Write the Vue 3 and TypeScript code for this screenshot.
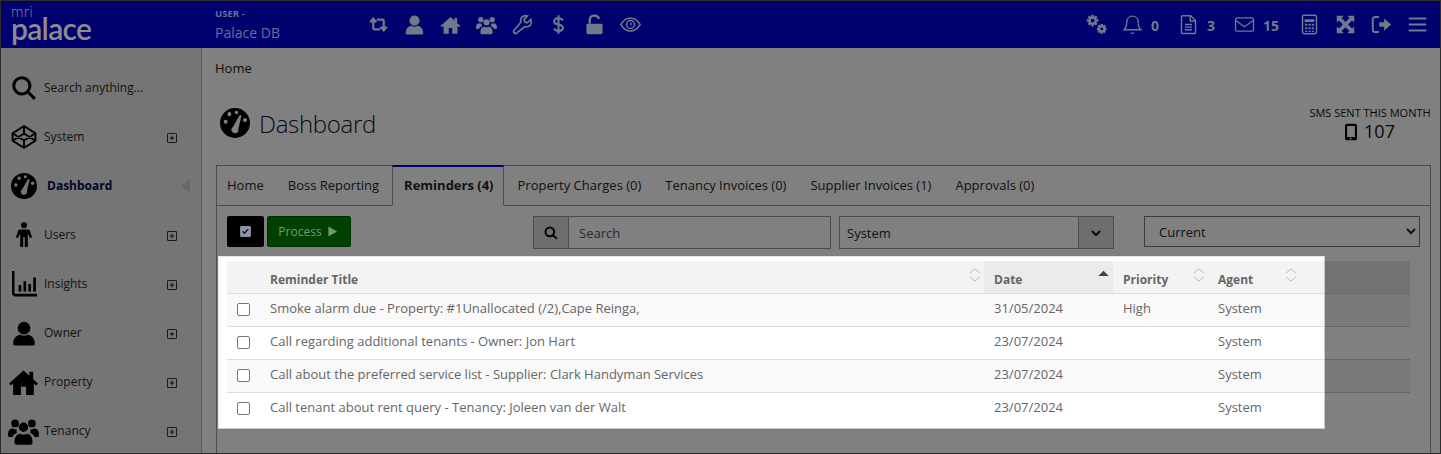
<script setup lang="ts">
const circ = (x: number, y: number, r: number) =>
  `M${x - r} ${y}a${r} ${r} 0 1 0 ${2 * r} 0a${r} ${r} 0 1 0 ${-2 * r} 0z`

const gear = (x: number, y: number, r: number) => {
  let d = circ(x, y, r)
  for (let i = 0; i < 8; i++) {
    const a = (i * Math.PI) / 4
    const p = (n: number) => `${(x + Math.cos(a) * n).toFixed(2)} ${(y + Math.sin(a) * n).toFixed(2)}`
    d += `M${p(r)}L${p(r * 1.85)}`
  }
  return d
}

interface Glyph { f?: string; s?: string; w?: number }

const I: Record<string, Glyph> = {
  retweet: { s: 'M6 6v10a1.5 1.5 0 0 0 1.5 1.5H14M2.5 9.5 6 5.5l3.5 4M10 6.5h6.5a1.5 1.5 0 0 1 1.5 1.5v10M14.5 14.5l3.5 4 3.5-4', w: 2.6 },
  user: { f: circ(12, 7.5, 5.8) + 'M2 22c0-5 2.8-8 6.5-8.5 2 1.3 5 1.3 7 0C19.2 14 22 17 22 22c0 1-.8 1.5-1.8 1.5H3.8C2.8 23.5 2 23 2 22z' },
  home: { f: 'M12 3.5.8 13.5 2.2 15 4 13.5V22.5h6V16h4v6.5h6V13.5L21.8 15l1.4-1.5L19.5 10.2V4.5h-3v3Z' },
  users: { f: circ(5.5, 6.5, 3) + circ(18.5, 6.5, 3) + circ(12, 9.5, 3.6) + 'M0 15c0-3 1.5-4.5 4-4.5 1 .7 2 .8 3 .5-.5 1-.6 2 0 3-1.6.5-3 1.5-3.5 3H1c-.6 0-1-.6-1-2zM24 15c0-3-1.5-4.5-4-4.5-1 .7-2 .8-3 .5.5 1 .6 2 0 3 1.6.5 3 1.5 3.5 3H23c.6 0 1-.6 1-2zM5 21c0-4 2-6.5 4.5-6.5 1.5 1 3.5 1 5 0C17 14.5 19 17 19 21c0 1.5-1 2-2 2H7c-1 0-2-.5-2-2z' },
  wrench: { s: 'M21.5 6 17.5 10l-3-.8-.8-3 4-4c-3-1-6.5.5-7.5 3.3-.4 1.2-.4 2.5 0 3.7L2.5 18.5a2.1 2.1 0 0 0 3 3l9.3-7.2c3.2 1 6.3-.6 7-3.5.3-1.7.2-3.3-.3-4.8z', w: 1.9 },
  dollar: { s: 'M17 7.5C16 5.5 14.2 4.8 12 4.8c-3 0-5 1.4-5 3.7s2 3 5 3.5 5 1.3 5 3.7-2 3.6-5 3.6c-2.2 0-4-.8-5-2.8M12 1.5v21', w: 2.4 },
  unlock: { f: 'M4.5 11h15c1 0 1.8.8 1.8 1.8v8.4c0 1-.8 1.8-1.8 1.8h-15c-1 0-1.8-.8-1.8-1.8v-8.4c0-1 .8-1.8 1.8-1.8z', s: 'M6.5 11V7a5.5 5.5 0 0 1 10.7-1.5', w: 2.6 },
  eye: { s: 'M1 12c3-5 7-7.5 11-7.5S20 7 23 12c-3 5-7 7.5-11 7.5S4 17 1 12z' + circ(12, 12, 4.5) + 'M12.5 10v3', w: 1.7 },
  cogs: { s: gear(7.5, 7.5, 3.6) + gear(18, 17, 3), w: 2.8 },
  bell: { s: 'M12 2.5c-4 0-6.5 3-6.5 6.5 0 5-1 7-3 9h19c-2-2-3-4-3-9 0-3.5-2.5-6.5-6.5-6.5zM10 21c.5 1.5 3.5 1.5 4 0', w: 1.5 },
  file: { s: 'M5 2h9.5L20 7.5V21a1.3 1.3 0 0 1-1.3 1.3H5.3A1.3 1.3 0 0 1 4 21V3.3A1.3 1.3 0 0 1 5.3 2zM14 2.2V8h6M8 12h8M8 15h8M8 18h8', w: 1.6 },
  mail: { s: 'M3.5 4.5h17A1.8 1.8 0 0 1 22.3 6.3v11.4a1.8 1.8 0 0 1-1.8 1.8h-17a1.8 1.8 0 0 1-1.8-1.8V6.3A1.8 1.8 0 0 1 3.5 4.5zM2 7.5l10 7 10-7', w: 1.5 },
  calc: { f: 'M6.5 6h11v3h-11zM7 11h2.5v2.5H7zM10.8 11h2.5v2.5h-2.5zM14.5 11H17v2.5h-2.5zM7 15h2.5v2.5H7zM10.8 15h2.5v2.5h-2.5zM14.5 15H17v2.5h-2.5zM7 19h2.5v1.5H7zM10.8 19h2.5v1.5h-2.5zM14.5 19H17v1.5h-2.5z', s: 'M6 1.5h12a2 2 0 0 1 2 2v17a2 2 0 0 1-2 2H6a2 2 0 0 1-2-2v-17a2 2 0 0 1 2-2z', w: 1.7 },
  arrows: { f: 'M2 2h8L7.5 4.5 12 9l4.5-4.5L14 2h8v8l-2.5-2.5L15 12l4.5 4.5L22 14v8h-8l2.5-2.5L12 15l-4.5 4.5L10 22H2v-8l2.5 2.5L9 12 4.5 7.5 2 10z' },
  signout: { f: 'M9.5 9.5H15V5l8 7-8 7v-4.5H9.5z', s: 'M9 3.5H4.5A2.5 2.5 0 0 0 2 6v12a2.5 2.5 0 0 0 2.5 2.5H9', w: 2.2 },
  bars: { f: 'M2 4h20v2.4H2zM2 10.8h20v2.4H2zM2 17.6h20V20H2z' },
  search: { s: circ(10, 10, 7.5) + 'M15.5 15.5l6.5 6.5', w: 2.8 },
  codepen: { s: 'M12 2 22.5 8.5v7L12 22 1.5 15.5v-7zM12 2v6.8M22.5 8.5 12 15.2 1.5 8.5M1.5 15.5 12 8.8l10.5 6.7M12 15.2V22', w: 1.8 },
  dashboard: { f: circ(12, 12, 12) + circ(4.5, 11, 1.6) + circ(7.5, 4.9, 1.6) + circ(13.2, 3.5, 1.4) + circ(20, 9.5, 1.6) + 'M15.8 5.5l1.4.5-2.5 10.7a2.8 2.8 0 1 1-4.4-1.6z' },
  male: { f: circ(12, 3, 2.8) + 'M8.5 7h7c1 0 1.7.6 2 1.5l2 5.5-2 .8-2-4.3V23h-2.8v-9h-1.4v9H8.5V10.5L6.5 14.8 4.5 14l2-5.5C6.8 7.6 7.5 7 8.5 7z' },
  chart: { f: 'M1 0h2.2v20c0 .6.4 1 1 1H24v2.5H4c-1.8 0-3-1.3-3-3zM7 13h2.5v6H7zM11.5 9.5H14V19h-2.5zM16 12h2.5v7H16zM20.5 6H23v13h-2.5z' },
  plus: { s: 'M2.8 1h18.4A1.8 1.8 0 0 1 23 2.8v18.4a1.8 1.8 0 0 1-1.8 1.8H2.8A1.8 1.8 0 0 1 1 21.2V2.8A1.8 1.8 0 0 1 2.8 1zM12 6.5v11M6.5 12h11', w: 2.4 },
  phone: { f: 'M6.5 1h11A2.5 2.5 0 0 1 20 3.5v17a2.5 2.5 0 0 1-2.5 2.5h-11A2.5 2.5 0 0 1 4 20.5v-17A2.5 2.5 0 0 1 6.5 1zM6.8 4v14.5h10.4V4zM12 19.5a1.3 1.3 0 1 0 0 2.4 1.3 1.3 0 0 0 0-2.4z' },
  chevron: { s: 'M5 8.5l7 7 7-7', w: 4 },
  check: { f: 'M4 2h16a2 2 0 0 1 2 2v16a2 2 0 0 1-2 2H4a2 2 0 0 1-2-2V4a2 2 0 0 1 2-2zM6 12.5l4 4 8-8-1.6-1.5L10 13.3 7.6 11z' },
  play: { f: 'M3 1l19 11L3 23z' },
}

const navLeft = ['retweet', 'user', 'home', 'users', 'wrench', 'dollar', 'unlock', 'eye']
const navRight: { icon: string; count?: string; w?: number }[] = [
  { icon: 'cogs' },
  { icon: 'bell', count: '0', w: 20 },
  { icon: 'file', count: '3', w: 20 },
  { icon: 'mail', count: '15', w: 29 },
  { icon: 'calc' },
  { icon: 'arrows' },
  { icon: 'signout' },
  { icon: 'bars' },
]
const side = [
  { icon: 'codepen', label: 'System' },
  { icon: 'dashboard', label: 'Dashboard', active: true },
  { icon: 'male', label: 'Users' },
  { icon: 'chart', label: 'Insights' },
  { icon: 'user', label: 'Owner' },
  { icon: 'home', label: 'Property' },
  { icon: 'users', label: 'Tenancy' },
]
const tabs = ['Home', 'Boss Reporting', 'Reminders (4)', 'Property Charges (0)', 'Tenancy Invoices (0)', 'Supplier Invoices (1)', 'Approvals (0)']
const rows = [
  { t: 'Smoke alarm due - Property: #1Unallocated (/2),Cape Reinga,', d: '31/05/2024', p: 'High', a: 'System' },
  { t: 'Call regarding additional tenants - Owner: Jon Hart', d: '23/07/2024', p: '', a: 'System' },
  { t: 'Call about the preferred service list - Supplier: Clark Handyman Services', d: '23/07/2024', p: '', a: 'System' },
  { t: 'Call tenant about rent query - Tenancy: Joleen van der Walt', d: '23/07/2024', p: '', a: 'System' },
]
const cols = [
  { label: 'Reminder Title', sorted: false },
  { label: 'Date', sorted: true },
  { label: 'Priority', sorted: false },
  { label: 'Agent', sorted: false },
]
</script>

<template>
  <div class="page">
    <header class="top">
      <div class="logo">
        <span class="mri">mri</span>
        <span class="palace">palace</span>
      </div>
      <div class="who">
        <span class="who-user">USER -</span>
        <span class="who-db">Palace DB</span>
      </div>
      <nav class="nav">
        <span v-for="n in navLeft" :key="n" class="nav-cell">
          <svg class="nav-icon" viewBox="0 0 24 24">
            <path v-if="I[n].f" :d="I[n].f" fill="currentColor" fill-rule="evenodd" />
            <path v-if="I[n].s" :d="I[n].s" fill="none" stroke="currentColor" :stroke-width="I[n].w" />
          </svg>
        </span>
      </nav>
      <nav class="nav nav-right">
        <template v-for="n in navRight" :key="n.icon">
          <span class="nav-cell">
            <svg class="nav-icon" viewBox="0 0 24 24">
              <path v-if="I[n.icon].f" :d="I[n.icon].f" fill="currentColor" fill-rule="evenodd" />
              <path v-if="I[n.icon].s" :d="I[n.icon].s" fill="none" stroke="currentColor" :stroke-width="I[n.icon].w" />
            </svg>
          </span>
          <span v-if="n.count" class="count" :style="{ width: n.w + 'px' }">{{ n.count }}</span>
        </template>
      </nav>
    </header>

    <div class="body">
      <aside class="side">
        <div class="side-item">
          <svg class="side-icon" viewBox="0 0 24 24">
            <path :d="I.search.s" fill="none" stroke="currentColor" :stroke-width="I.search.w" />
          </svg>
          <span class="side-label">Search anything...</span>
        </div>
        <div v-for="s in side" :key="s.label" class="side-item" :class="{ active: s.active }">
          <svg class="side-icon" :class="'i-' + s.icon" viewBox="0 0 24 24">
            <path v-if="I[s.icon].f" :d="I[s.icon].f" fill="currentColor" fill-rule="evenodd" />
            <path v-if="I[s.icon].s" :d="I[s.icon].s" fill="none" stroke="currentColor" :stroke-width="I[s.icon].w" />
          </svg>
          <span class="side-label">{{ s.label }}</span>
          <span v-if="s.active" class="caret"></span>
          <svg v-else class="plus" viewBox="0 0 24 24">
            <path :d="I.plus.s" fill="none" stroke="currentColor" :stroke-width="I.plus.w" />
          </svg>
        </div>
      </aside>

      <main class="main">
        <div class="crumb">Home</div>
        <div class="title-row">
          <div class="title">
            <svg class="title-icon" viewBox="0 0 24 24">
              <path :d="I.dashboard.f" fill="currentColor" fill-rule="evenodd" />
            </svg>
            <h1>Dashboard</h1>
          </div>
          <div class="sms">
            <span class="sms-label">SMS SENT THIS MONTH</span>
            <span class="sms-value">
              <svg class="sms-icon" viewBox="0 0 24 24">
                <path :d="I.phone.f" fill="currentColor" fill-rule="evenodd" />
              </svg>
              107
            </span>
          </div>
        </div>

        <section class="panel">
          <div class="tabs">
            <span v-for="(t, i) in tabs" :key="t" class="tab" :class="{ on: i === 2, first: i === 0, next: i === 3 }">{{ t }}</span>
          </div>
          <div class="tools">
            <button class="btn-black" type="button">
              <svg viewBox="0 0 24 24" class="btn-check"><path :d="I.check.f" fill="currentColor" fill-rule="evenodd" /></svg>
            </button>
            <button class="btn-green" type="button">
              Process
              <svg viewBox="0 0 24 24" class="btn-play"><path :d="I.play.f" fill="currentColor" /></svg>
            </button>
            <div class="search-box">
              <span class="addon">
                <svg viewBox="0 0 24 24" class="addon-icon"><path :d="I.search.s" fill="none" stroke="currentColor" stroke-width="3.4" /></svg>
              </span>
              <span class="search-text">Search</span>
            </div>
            <div class="combo">
              <span class="combo-text">System</span>
              <span class="combo-btn">
                <svg viewBox="0 0 24 24" class="addon-icon"><path :d="I.chevron.s" fill="none" stroke="currentColor" stroke-width="3.4" /></svg>
              </span>
            </div>
            <select class="status">
              <option>Current</option>
            </select>
          </div>

          <div class="card">
            <table class="grid">
              <colgroup>
                <col class="c0" /><col class="c1" /><col class="c2" /><col class="c3" /><col class="c4" /><col class="c5" /><col class="c6" />
              </colgroup>
              <thead>
                <tr>
                  <th></th>
                  <th v-for="c in cols" :key="c.label" :class="{ sorted: c.sorted }">
                    <div class="th-in">
                      <span>{{ c.label }}</span>
                      <svg v-if="c.sorted" class="sort-on" viewBox="0 0 12 14"><path d="M6 1l6 6H0z" fill="currentColor" /></svg>
                      <svg v-else class="sort" viewBox="0 0 12 14"><path d="M1 5l5-4 5 4M1 9l5 4 5-4" fill="none" stroke="currentColor" stroke-width="1" /></svg>
                    </div>
                  </th>
                  <th class="edge"></th>
                  <th class="shade"></th>
                </tr>
              </thead>
              <tbody>
                <tr v-for="(r, i) in rows" :key="r.t" :class="{ odd: i % 2 === 0 }">
                  <td class="cb"><span class="box"></span></td>
                  <td>{{ r.t }}</td>
                  <td>{{ r.d }}</td>
                  <td>{{ r.p }}</td>
                  <td>{{ r.a }}</td>
                  <td class="edge"></td>
                  <td class="shade"></td>
                </tr>
              </tbody>
            </table>
          </div>
        </section>
      </main>
    </div>
  </div>
</template>

<style>
html, body { margin: 0; background: #808080; }
</style>

<style scoped>
.page {
  width: 1441px;
  height: 454px;
  box-sizing: border-box;
  border: 1px solid #2c2c2c;
  overflow: hidden;
  display: flex;
  flex-direction: column;
  background: #808080;
  color: #111;
  font-family: "Open Sans", sans-serif;
  font-size: 13px;
}
.top {
  flex: none;
  height: 47px;
  background: #00006e;
  color: #6f7a8a;
  display: flex;
  align-items: center;
}
.logo {
  width: 214px;
  flex: none;
  box-sizing: border-box;
  padding-left: 10px;
  height: 47px;
  display: flex;
  flex-direction: column;
  color: #8c8c8c;
}
.mri { font-size: 14px; font-weight: 300; height: 12px; margin-top: 5px; line-height: 12px; letter-spacing: .3px; }
.palace { font-size: 30px; font-weight: 600; line-height: 20px; letter-spacing: -.7px; font-family: Lato, "Open Sans", sans-serif; }
.who {
  width: 145px;
  flex: none;
  display: flex;
  flex-direction: column;
  align-self: flex-start;
  padding-top: 6px;
  color: #63709a;
}
.who-user { font-size: 9.5px; font-weight: 700; line-height: 14px; }
.who-db { font-size: 14px; line-height: 20px; margin-top: 2px; }
.nav { display: flex; align-items: center; }
.nav-right { margin-left: auto; margin-right: 5px; }
.nav-cell { width: 36px; height: 24px; display: flex; align-items: center; justify-content: center; }
.nav-icon { width: 21px; height: 21px; }
.count { font-size: 14px; font-weight: 700; line-height: 24px; margin-top: 3px; padding-left: 1px; box-sizing: border-box; }

.body { flex: 1; display: flex; min-height: 0; }
.side {
  width: 201px;
  flex: none;
  box-sizing: border-box;
  background: #757575;
  border-right: 1px solid #5f5f5f;
  padding-top: 15px;
  color: #000;
}
.side-item { height: 49px; display: flex; align-items: center; padding-left: 10px; position: relative; }
.side-icon { width: 26px; height: 26px; flex: none; }
.i-home, .i-users { width: 31px; height: 31px; margin: 0 -1.5px 0 -3.5px; }
.side-label { margin-left: 7px; font-size: 12px; color: #111; }
.side-item.active .side-label { margin-left: 10px; font-weight: 700; color: #00082a; font-size: 12px; }
.plus { width: 10px; height: 10px; position: absolute; left: 166px; top: 21px; color: #111; }
.caret {
  position: absolute;
  left: 180px;
  top: 18px;
  border-style: solid;
  border-width: 7px 9px 7px 0;
  border-color: transparent #686868 transparent transparent;
}

.main { flex: 1; min-width: 0; padding: 0 9px 0 14px; display: flex; flex-direction: column; }
.crumb { padding-top: 11px; line-height: 18px; margin-left: -1px; color: #140c08; }
.title-row { display: flex; justify-content: space-between; height: 88px; }
.title { display: flex; align-items: center; padding-left: 4px; color: #000; margin-top: 16px; height: 60px; }
.title-icon { width: 30px; height: 30px; }
h1 { margin: 0 0 0 9px; font-size: 24px; font-weight: 300; color: #0a0a14; letter-spacing: -.3px; }
.sms { width: 122px; display: flex; flex-direction: column; align-items: center; padding-top: 29px; }
.sms-label { font-size: 11px; white-space: nowrap; line-height: 14px; color: #0a0a0a; }
.sms-value { font-size: 18px; line-height: 23px; display: flex; align-items: center; gap: 4px; color: #0a0a0a; margin-right: 3px; }
.sms-icon { width: 18px; height: 20px; color: #000; }

.panel { flex: 1; border: 1px solid #4c4c4c; border-bottom: 0; min-height: 0; }
.tabs { display: flex; height: 40px; box-sizing: border-box; border-bottom: 1px solid #4c4c4c; }
.tab {
  box-sizing: border-box;
  height: 40px;
  padding: 0 11px;
  line-height: 38px;
  border: 1px solid transparent;
  border-top-width: 0;
  white-space: nowrap;
}
.tab.first { padding-left: 9px; }
.tab.next { padding-left: 13px; }
.tab.on {
  font-weight: 700;
  background: #808080;
  border-color: #4c4c4c;
  border-top: 2px solid #000080;
  border-bottom-color: #808080;
  line-height: 36px;
  margin-top: -1px;
  margin-left: 1px;
  padding-right: 9px;
  height: 41px;
}
.tools { display: flex; align-items: flex-start; padding: 10px 0 0 10px; height: 50px; box-sizing: border-box; }
.btn-black {
  width: 37px; height: 31px; background: #000; border: 0; border-radius: 2px; padding: 0;
  display: flex; align-items: center; justify-content: center; color: #8a94a6;
}
.btn-check { width: 13px; height: 13px; }
.btn-green {
  margin-left: 3px; width: 84px; height: 31px; background: #004000; border: 1px solid #003000; border-radius: 2px;
  color: #6f9b6f; font: 12px "Open Sans", sans-serif; display: flex; align-items: center; justify-content: center; gap: 5px; padding: 0 2px 0 0;
}
.btn-play { width: 11px; height: 13px; }
.search-box { margin-left: 182px; width: 298px; height: 33px; box-sizing: border-box; border: 1px solid #4c4c4c; display: flex; align-items: center; }
.addon { width: 35px; height: 31px; background: #6e6e6e; border-right: 1px solid #4c4c4c; display: flex; align-items: center; justify-content: center; flex: none; box-sizing: border-box; color: #080808; }
.addon-icon { width: 14px; height: 14px; }
.search-text { margin-left: 10px; color: #2a2a2a; }
.combo { margin-left: 8px; width: 275px; height: 33px; box-sizing: border-box; border: 1px solid #4c4c4c; display: flex; align-items: center; justify-content: space-between; }
.combo-text { margin-left: 7px; color: #111; }
.combo-btn { width: 35px; height: 31px; background: #6e6e6e; border-left: 1px solid #4c4c4c; display: flex; align-items: center; justify-content: center; box-sizing: border-box; color: #080808; }
.status {
  margin-left: 30px; width: 276px; height: 31px; border: 1px solid #3c3c3c; border-radius: 0; background: #808080;
  font: 13px "Open Sans", sans-serif; color: #111; padding-left: 10px;
}

.card {
  width: 1107px;
  margin-left: 1px;
  box-sizing: border-box;
  background: #fff;
  border: 1px solid #c8c8c8;
  border-left-color: #e4e4e4;
  border-top-color: #e4e4e4;
  padding: 4px 0 3px 8px;
}
.grid { width: 1183px; table-layout: fixed; border-collapse: separate; border-spacing: 0; color: #666; }
.c0 { width: 33px; } .c1 { width: 724px; } .c2 { width: 129px; } .c3 { width: 95px; } .c4 { width: 92px; } .c5 { width: 25px; } .c6 { width: 85px; }
th { height: 32px; padding: 0 3px 0 10px; background: #f3f3f3; text-align: left; font-size: 12px; font-weight: 700; color: #666; box-sizing: border-box; vertical-align: middle; }
th.sorted { background: #ebebeb; }
.th-in { display: flex; justify-content: space-between; align-items: center; height: 32px; }
.th-in > span { padding-top: 4px; }
.sort { width: 12px; height: 16px; color: #bbb; margin-top: -4px; flex: none; }
.sort-on { width: 11px; height: 12px; color: #444; margin-top: -3px; flex: none; margin-right: 1px; }
td { height: 33px; padding: 0 0 4px 10px; box-sizing: border-box; border-top: 1px solid #ddd; white-space: nowrap; font-size: 13px; }
tr.odd td { background: #f9f9f9; }
td.cb { padding-bottom: 2px; }
.box { display: block; width: 13px; height: 13px; box-sizing: border-box; border: 1px solid #777; border-radius: 2px; background: #fff; }
th.edge, td.edge { border-right: 1px solid #c8c8c8; padding: 0; }
th.shade { background: #727272; padding: 0; }
td.shade, tr.odd td.shade { background: #808080; border-top-color: #666; padding: 0; }
tr.odd td.shade { background: #7a7a7a; }
</style>
